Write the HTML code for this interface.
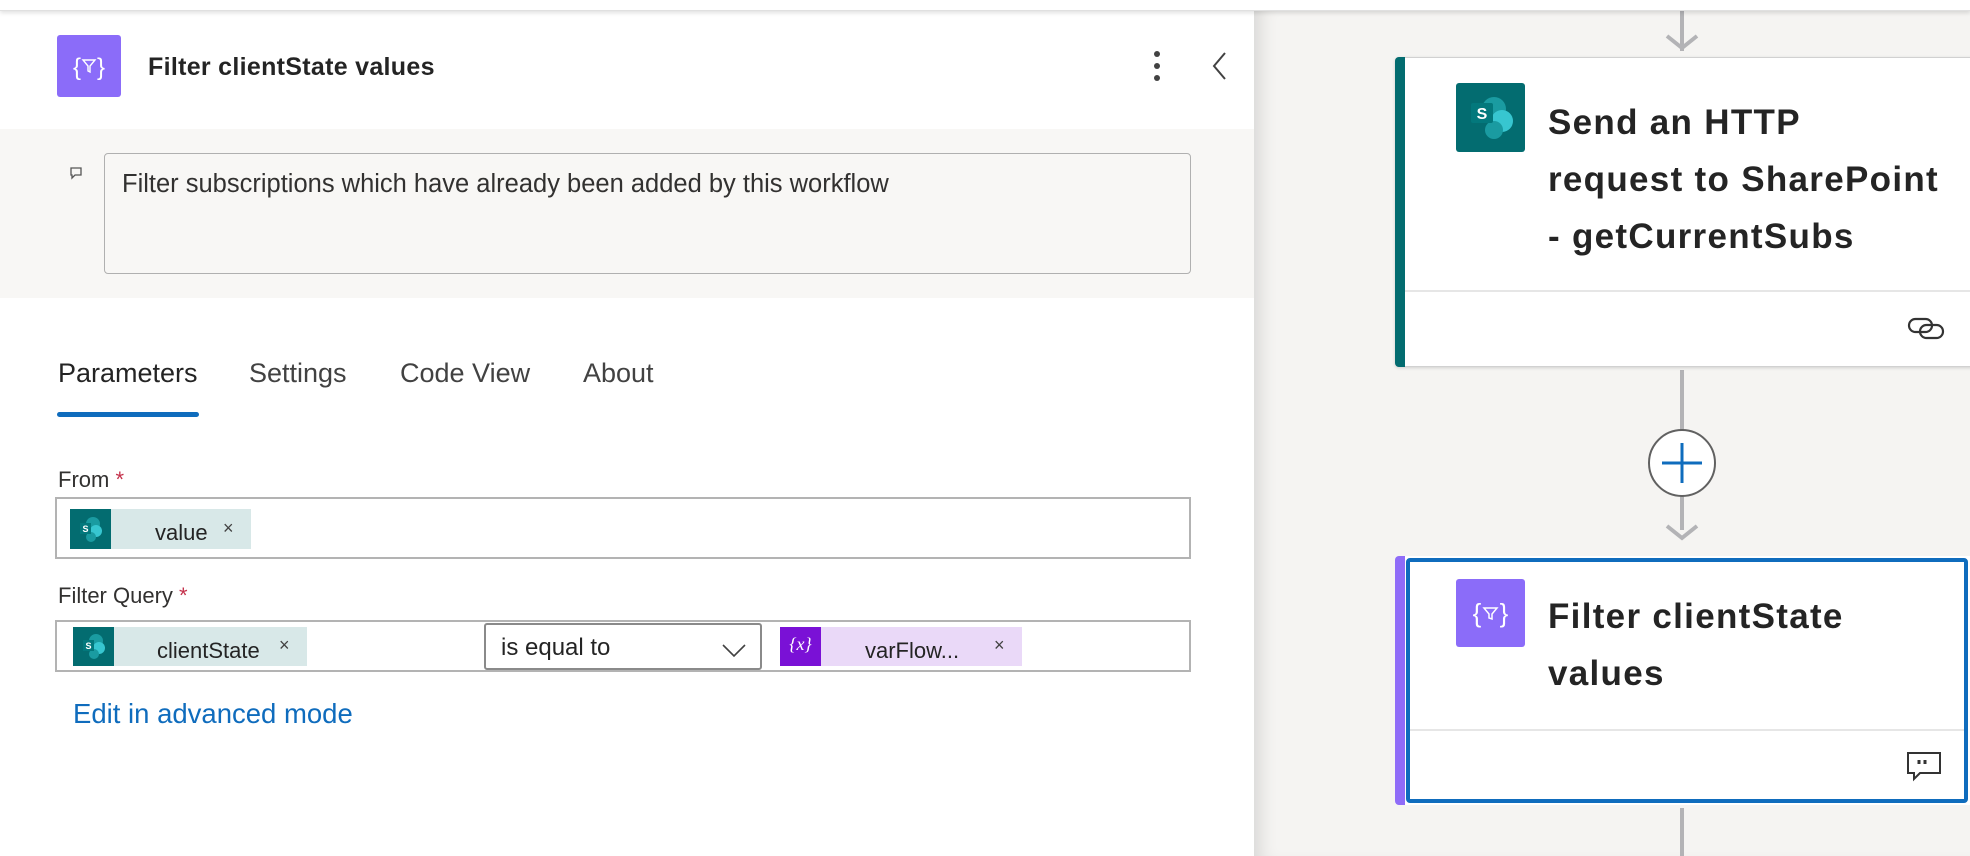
<!DOCTYPE html>
<html><head><meta charset="utf-8"><style>
*{box-sizing:border-box;margin:0;padding:0}
body{width:1970px;height:856px;overflow:hidden;background:#fff;font-family:"Liberation Sans",sans-serif;color:#242424;position:relative}
.abs{position:absolute}
</style></head><body>
<div class="abs" style="left:0;top:0;width:1970px;height:11px;background:#fff;border-bottom:1px solid #e0e0e0;box-shadow:0 2px 4px rgba(0,0,0,.12);z-index:5"></div>

<div class="abs" style="left:1254px;top:11px;width:716px;height:845px;background:#f5f4f2;box-shadow:inset 18px 0 18px -12px rgba(0,0,0,.12)"></div>

<div class="abs" style="left:0;top:11px;width:1254px;height:845px;background:#fff"></div>
<div class="abs" style="left:57px;top:35px;width:64px;height:62px;background:#8b6cf9;border-radius:3px"></div>
<svg class="abs" style="left:57px;top:35px" width="64" height="62" viewBox="0 0 64 62"><text x="20" y="40" fill="#fff" font-size="24" text-anchor="middle" font-family="Liberation Sans">{</text><text x="44" y="40" fill="#fff" font-size="24" text-anchor="middle" font-family="Liberation Sans">}</text><path d="M26 25h12l-5 6v6l-2 -1v-5z" fill="none" stroke="#fff" stroke-width="1.4"/></svg>
<div class="abs" style="left:148px;top:53px;font-size:25px;font-weight:bold;color:#242424;letter-spacing:0.3px">Filter clientState values</div>
<svg class="abs" style="left:1150px;top:50px" width="14" height="32"><circle cx="7" cy="4" r="3" fill="#424242"/><circle cx="7" cy="16" r="3" fill="#424242"/><circle cx="7" cy="28" r="3" fill="#424242"/></svg>
<svg class="abs" style="left:1210px;top:50px" width="20" height="32"><path d="M15 3L4 16l11 13" fill="none" stroke="#424242" stroke-width="2"/></svg>

<div class="abs" style="left:0;top:129px;width:1254px;height:169px;background:#f8f7f5"></div>
<svg class="abs" style="left:69px;top:166px" width="14" height="16"><path d="M2 2h10v7H6l-3 3V9H2z" fill="none" stroke="#555" stroke-width="1.3"/></svg>
<div class="abs" style="left:104px;top:153px;width:1087px;height:121px;border:1px solid #b0b0b0;border-radius:4px;background:#f8f7f5"></div>
<div class="abs" style="left:122px;top:170px;font-size:25.5px;color:#323130">Filter subscriptions which have already been added by this workflow</div>

<div class="abs" style="left:58px;top:358px;font-size:27px;color:#242424">Parameters</div>
<div class="abs" style="left:249px;top:358px;font-size:27px;color:#424242">Settings</div>
<div class="abs" style="left:400px;top:358px;font-size:27px;color:#424242">Code View</div>
<div class="abs" style="left:583px;top:358px;font-size:27px;color:#424242">About</div>
<div class="abs" style="left:57px;top:412px;width:142px;height:5px;background:#0f6cbd;border-radius:3px"></div>

<div class="abs" style="left:58px;top:467px;font-size:22px;color:#323130">From <span style="color:#c4314b">*</span></div>
<div class="abs" style="left:55px;top:497px;width:1136px;height:62px;border:2px solid #b3b3b3"></div>
<div class="abs" style="left:70px;top:509px;width:181px;height:40px;background:#d8e8e8"></div>
<div class="abs" style="left:70px;top:509px;width:41px;height:40px;background:#036c70"></div>
<svg class="abs" style="left:74px;top:513px" width="32" height="32"><circle cx="19" cy="11" r="7" fill="#1a9ba1"/><circle cx="22" cy="18" r="6" fill="#37c6d0"/><circle cx="17" cy="24" r="5" fill="#1a9ba1"/><rect x="6" y="10" width="11" height="11" fill="#03787c"/><text x="11.5" y="19" fill="#fff" font-size="9" font-weight="bold" text-anchor="middle">S</text></svg>
<div class="abs" style="left:155px;top:520px;font-size:22px;color:#242424">value</div>
<div class="abs" style="left:223px;top:518px;font-size:18px;color:#424242">×</div>

<div class="abs" style="left:58px;top:583px;font-size:22px;color:#323130">Filter Query <span style="color:#c4314b">*</span></div>
<div class="abs" style="left:55px;top:620px;width:1136px;height:52px;border:2px solid #b3b3b3"></div>
<div class="abs" style="left:73px;top:627px;width:234px;height:39px;background:#d8e8e8"></div>
<div class="abs" style="left:73px;top:627px;width:41px;height:39px;background:#036c70"></div>
<svg class="abs" style="left:77px;top:630px" width="32" height="32"><circle cx="19" cy="11" r="7" fill="#1a9ba1"/><circle cx="22" cy="18" r="6" fill="#37c6d0"/><circle cx="17" cy="24" r="5" fill="#1a9ba1"/><rect x="6" y="10" width="11" height="11" fill="#03787c"/><text x="11.5" y="19" fill="#fff" font-size="9" font-weight="bold" text-anchor="middle">S</text></svg>
<div class="abs" style="left:157px;top:638px;font-size:22px;color:#242424">clientState</div>
<div class="abs" style="left:279px;top:635px;font-size:18px;color:#424242">×</div>
<div class="abs" style="left:484px;top:623px;width:278px;height:47px;border:2px solid #8a8a8a;border-radius:3px;background:#fff"></div>
<div class="abs" style="left:501px;top:634px;font-size:24px;color:#242424">is equal to</div>
<svg class="abs" style="left:720px;top:640px" width="28" height="20"><path d="M3 5l11 11 11-11" fill="none" stroke="#424242" stroke-width="1.6"/></svg>
<div class="abs" style="left:780px;top:627px;width:242px;height:39px;background:#ead9f8"></div>
<div class="abs" style="left:780px;top:627px;width:41px;height:39px;background:#7a11d6"></div>
<div class="abs" style="left:780px;top:634px;width:41px;text-align:center;font-family:'Liberation Serif',serif;font-style:italic;font-size:18px;color:#fff">{x}</div>
<div class="abs" style="left:865px;top:638px;font-size:22px;color:#242424">varFlow...</div>
<div class="abs" style="left:994px;top:635px;font-size:18px;color:#424242">×</div>

<div class="abs" style="left:73px;top:698px;font-size:27.5px;color:#0f6cbd">Edit in advanced mode</div>

<div class="abs" style="left:1680px;top:11px;width:4px;height:40px;background:#b3b3b6"></div>
<svg class="abs" style="left:1664px;top:30px" width="36" height="24"><path d="M3 6l15 12 15-12" fill="none" stroke="#b3b3b6" stroke-width="4"/></svg>
<div class="abs" style="left:1680px;top:370px;width:4px;height:160px;background:#b3b3b6"></div>
<svg class="abs" style="left:1664px;top:520px" width="36" height="24"><path d="M3 6l15 12 15-12" fill="none" stroke="#b3b3b6" stroke-width="4"/></svg>
<svg class="abs" style="left:1647px;top:428px" width="70" height="70"><circle cx="35" cy="35" r="33" fill="#fff" stroke="#616161" stroke-width="2"/><path d="M15 35h40M35 15v40" stroke="#0f6cbd" stroke-width="3"/></svg>
<div class="abs" style="left:1680px;top:808px;width:4px;height:48px;background:#b3b3b6"></div>

<div class="abs" style="left:1395px;top:57px;width:580px;height:310px;background:#fff;border:1px solid #d1d1d1;border-radius:4px;box-shadow:0 1px 3px rgba(0,0,0,.15)"></div>
<div class="abs" style="left:1395px;top:57px;width:10px;height:310px;background:#036c70;border-radius:4px 0 0 4px"></div>
<div class="abs" style="left:1456px;top:83px;width:69px;height:69px;background:#036c70;border-radius:3px"></div>
<svg class="abs" style="left:1456px;top:83px" width="69" height="69" viewBox="0 0 69 69"><circle cx="38" cy="26" r="12" fill="#1a9ba1"/><circle cx="46" cy="38" r="11" fill="#37c6d0"/><circle cx="38" cy="47" r="9" fill="#1a9ba1"/><rect x="15" y="20" width="22" height="20" rx="2" fill="#03787c"/><text x="26" y="36" fill="#fff" font-size="16" font-weight="bold" text-anchor="middle" font-family="Liberation Sans">S</text></svg>
<div class="abs" style="left:1548px;top:94px;font-size:35px;font-weight:bold;line-height:57px;color:#242424;letter-spacing:1.3px">Send an HTTP<br>request to SharePoint<br>- getCurrentSubs</div>
<div class="abs" style="left:1405px;top:290px;width:570px;height:2px;background:#e6e6e6"></div>
<svg class="abs" style="left:1900px;top:300px" width="60" height="50"><rect x="9" y="19" width="23" height="13" rx="6.5" fill="none" stroke="#333" stroke-width="2.2"/><rect x="20" y="25" width="23" height="13" rx="6.5" fill="none" stroke="#333" stroke-width="2.2"/></svg>

<div class="abs" style="left:1395px;top:556px;width:580px;height:249px;background:#fff;border-radius:4px"></div>
<div class="abs" style="left:1395px;top:556px;width:10px;height:249px;background:#8f6cf8;border-radius:4px 0 0 4px"></div>
<div class="abs" style="left:1406px;top:558px;width:562px;height:245px;border:4px solid #0f6cbd;border-radius:4px"></div>
<div class="abs" style="left:1456px;top:579px;width:69px;height:68px;background:#8b6cf9;border-radius:3px"></div>
<svg class="abs" style="left:1456px;top:579px" width="69" height="68" viewBox="0 0 69 68"><text x="21" y="43" fill="#fff" font-size="26" text-anchor="middle" font-family="Liberation Sans">{</text><text x="48" y="43" fill="#fff" font-size="26" text-anchor="middle" font-family="Liberation Sans">}</text><path d="M28 29h13l-5 6v5l-3 -1v-4z" fill="none" stroke="#fff" stroke-width="1.5"/></svg>
<div class="abs" style="left:1548px;top:588px;font-size:35px;font-weight:bold;line-height:57px;color:#242424;letter-spacing:1.3px">Filter clientState<br>values</div>
<div class="abs" style="left:1410px;top:729px;width:554px;height:2px;background:#e6e6e6"></div>
<svg class="abs" style="left:1906px;top:750px" width="36" height="32"><path d="M2 3h32v20H14l-6 6v-6H2z" fill="none" stroke="#333" stroke-width="2"/><path d="M13 10v4M19 10v4" stroke="#333" stroke-width="3"/></svg>
</body></html>
